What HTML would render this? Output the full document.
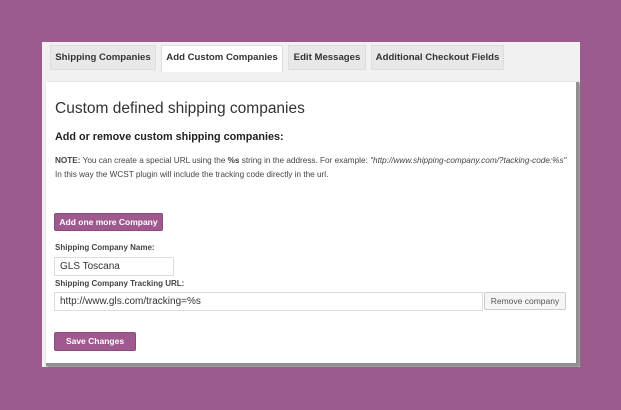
<!DOCTYPE html>
<html><head><style>
*{margin:0;padding:0;box-sizing:border-box}
body{width:621px;height:410px;background:#9b5b8e;font-family:"Liberation Sans",sans-serif;position:relative;overflow:hidden;color:#222}
.panel{position:absolute;left:42px;top:42px;width:538px;height:325px;background:#f1f1f1;}
.tab{position:absolute;top:45px;height:25px;border:1px solid #ddd;background:#e8e8e8;font-size:9.6px;font-weight:bold;color:#333;line-height:23px;text-align:center;white-space:nowrap}
.tab.act{background:#fff;height:27px;top:45px;border-bottom:none}
.box{position:absolute;left:46px;top:82px;width:533px;height:284px;background:#fff;border-right:3px solid #8f8f8f;border-bottom:3px solid #8f8f8f;box-shadow:1px 1px 2px #777}
.a{position:absolute;white-space:nowrap}
.btn{position:absolute;background:#a0598f;border:1px solid #8a4a7b;border-radius:2px;color:#fff;font-size:8.5px;font-weight:bold;text-align:center;white-space:nowrap}
.inp{position:absolute;border:1px solid #ddd;background:#fff;font-size:10px;padding-left:5px;color:#333;white-space:nowrap}
</style></head><body>
<div class="panel"></div>
<div class="tab" style="left:50px;width:106px">Shipping Companies</div>
<div class="tab act" style="left:161px;width:122px">Add Custom Companies</div>
<div class="tab" style="left:288px;width:78px">Edit Messages</div>
<div class="tab" style="left:371px;width:133px">Additional Checkout Fields</div>
<div class="box"></div>
<div class="a" style="left:55px;top:100px;font-size:15.5px;color:#333">Custom defined shipping companies</div>
<div class="a" style="left:55px;top:131px;font-size:10.8px;font-weight:bold;color:#222">Add or remove custom shipping companies:</div>
<div class="a" style="left:55px;top:156px;font-size:8.2px;color:#444"><b>NOTE:</b> You can create a special URL using the <b>%s</b> string in the address. For example: <i>"http://www.shipping-company.com/?tacking-code:%s"</i></div>
<div class="a" style="left:55px;top:170px;font-size:8.2px;color:#444">In this way the WCST plugin will include the tracking code directly in the url.</div>
<div class="btn" style="left:54px;top:213px;width:109px;height:18px;line-height:16px">Add one more Company</div>
<div class="a" style="left:55px;top:243px;font-size:8px;font-weight:bold;color:#444">Shipping Company Name:</div>
<div class="inp" style="left:54px;top:257px;width:120px;height:19px;line-height:17px">GLS Toscana</div>
<div class="a" style="left:55px;top:279px;font-size:8px;font-weight:bold;color:#444">Shipping Company Tracking URL:</div>
<div class="inp" style="left:54px;top:292px;width:429px;height:19px;line-height:17px">http://www.gls.com/tracking=%s</div>
<div class="inp" style="left:484px;top:292px;width:82px;height:18px;line-height:16px;background:#f6f6f6;border-color:#ccc;border-radius:2px;font-size:8.5px;color:#555;padding:0;text-align:center">Remove company</div>
<div class="btn" style="left:54px;top:332px;width:82px;height:19px;line-height:17px">Save Changes</div>
</body></html>
